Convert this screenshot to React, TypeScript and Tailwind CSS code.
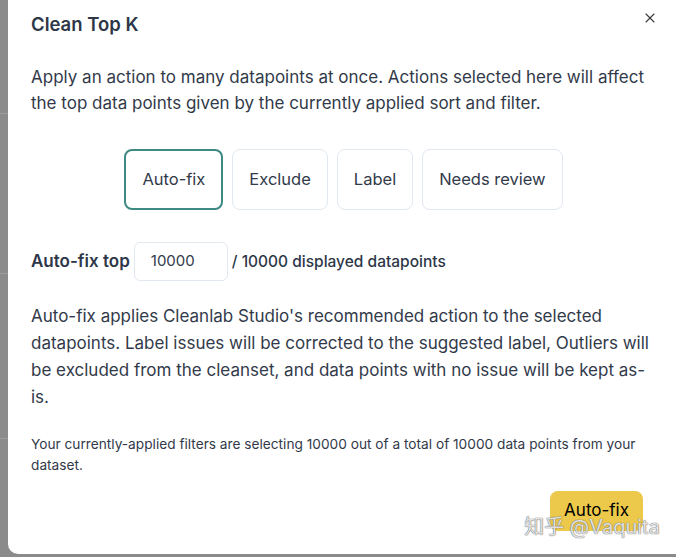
import { X } from "lucide-react";

const ACTIONS = ["Auto-fix", "Exclude", "Label", "Needs review"];

export default function App() {
  const selected = "Auto-fix";

  return (
    <div
      className="flex w-[676px] h-[557px] bg-[#8b8b8b] overflow-hidden"
      style={{ fontFamily: "Inter, 'Noto Sans CJK SC', sans-serif" }}
    >
      {/* page behind the modal */}
      <div className="w-[8px] flex flex-col">
        <div className="h-[114px] border-b border-[#9e9e9e]" />
        <div className="h-[160px] border-b border-[#9e9e9e]" />
        <div className="h-[165px] border-b border-[#9e9e9e]" />
      </div>

      <div className="relative flex-1 mb-[3px] bg-white rounded-bl-[10px] pl-[23px] pr-[20px] pt-[10px] text-[#323a4a]">
        <button className="absolute right-[18px] top-[10px] text-[#3a3a3a]">
          <X size={16} strokeWidth={1.6} />
        </button>

        <h2 className="text-[18.5px] leading-[28px] font-semibold text-[#2d3748]">Clean Top K</h2>

        <p className="mt-[26px] text-[17px] leading-[26px]">
          Apply an action to many datapoints at once. Actions selected here will affect the top
          data points given by the currently applied sort and filter.
        </p>

        <div className="mt-[33px] flex justify-center gap-[9px]">
          {ACTIONS.map((a) => (
            <button
              key={a}
              className={
                a === selected
                  ? "h-[61px] px-[16px] rounded-[8px] border-2 border-[#3d8a83] text-[16.5px]"
                  : "h-[61px] px-[16px] rounded-[8px] border border-[#e2e8f0] text-[16.5px]"
              }
            >
              {a}
            </button>
          ))}
        </div>

        <div className="mt-[32px] flex items-center gap-[4px]">
          <span className="text-[17px] font-semibold text-[#2d3748]">Auto-fix top</span>
          <div className="w-[94px] h-[39px] rounded-[6px] border border-[#e2e8f0] flex items-center px-[16px] text-[15px]">
            10000
          </div>
          <span className="text-[15.5px] font-medium text-[#2d3748]">/ 10000 displayed datapoints</span>
        </div>

        <p className="mt-[22px] text-[17px] leading-[27px]">
          Auto-fix applies Cleanlab Studio's recommended action to the selected datapoints. Label
          issues will be corrected to the suggested label, Outliers will be excluded from the
          cleanset, and data points with no issue will be kept as-is.
        </p>

        <p className="mt-[23px] text-[13.7px] leading-[21px]">
          Your currently-applied filters are selecting 10000 out of a total of 10000 data points
          from your dataset.
        </p>

        <div className="mt-[15px] flex justify-end pr-[13px]">
          <button className="h-[40px] px-[14px] rounded-[8px] bg-[#ecc94b] text-black text-[17px]">
            Auto-fix
          </button>
        </div>

        <div className="absolute right-[16px] top-[512px] text-[20px] text-white/80 [text-shadow:0_0_1px_#666,0_0_1px_#666] pointer-events-none">
          知乎 @Vaquita
        </div>
      </div>
    </div>
  );
}
